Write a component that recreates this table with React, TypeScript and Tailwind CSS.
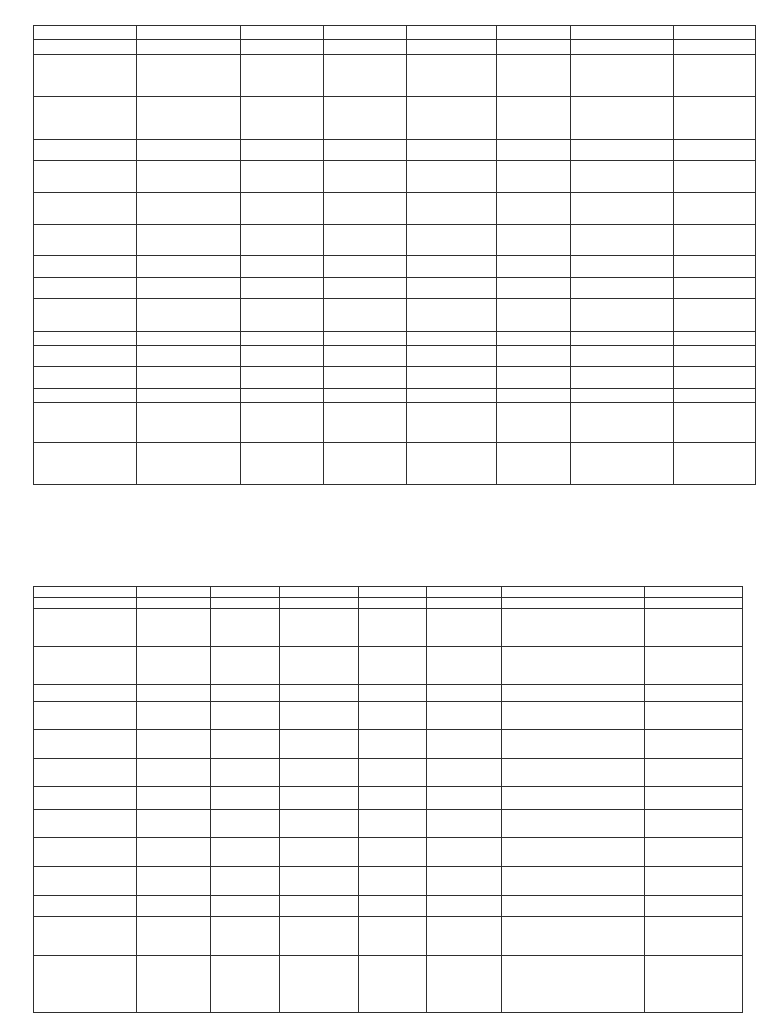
const tableOne = {
  cols: "grid-cols-[102px_103px_82px_82px_89px_73px_102px_81px]",
  rows: "grid-rows-[13px_14px_41px_42px_20px_31px_31px_30px_21px_20px_32px_13px_20px_21px_13px_39px_41px]",
  rowCount: 17,
};

const tableTwo = {
  cols: "grid-cols-[102px_73px_68px_78px_67px_74px_142px_97px]",
  rows: "grid-rows-[10px_10px_37px_37px_16px_27px_28px_27px_22px_27px_28px_28px_20px_38px_56px]",
  rowCount: 15,
};

function BlankTable({ cols, rows, rowCount }: { cols: string; rows: string; rowCount: number }) {
  const cells = Array.from({ length: rowCount * 8 });
  return (
    <div className={`grid w-fit gap-px bg-[#2e2e2e] p-px ${cols} ${rows}`}>
      {cells.map((_, i) => (
        <div key={i} className="bg-white" />
      ))}
    </div>
  );
}

export default function App() {
  return (
    <div className="min-h-[1024px] bg-white pl-[33px] pt-[25px]">
      <BlankTable {...tableOne} />
      <div className="mt-[101px]">
        <BlankTable {...tableTwo} />
      </div>
    </div>
  );
}
